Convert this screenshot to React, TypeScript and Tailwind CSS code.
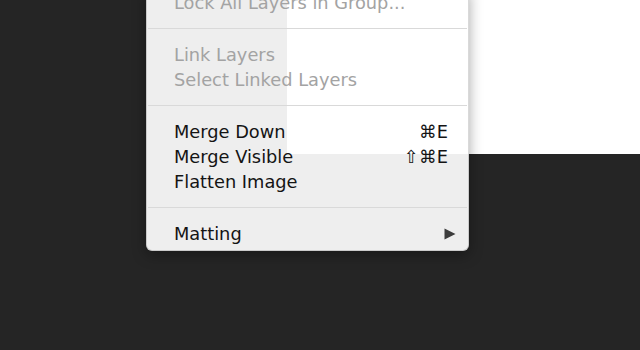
import React from "react";

const font = { fontFamily: '"DejaVu Sans", "Liberation Sans", sans-serif' };

function Item({
  label,
  disabled,
  shortcut,
  submenu,
}: {
  label: string;
  disabled?: boolean;
  shortcut?: string;
  submenu?: boolean;
}) {
  return (
    <div
      className={`flex h-[25px] items-center pl-[27px] pr-[12px] text-[17.8px] leading-[25px] ${
        disabled ? "text-[#a3a3a3]" : "text-[#141414]"
      }`}
    >
      <span className="flex-1 whitespace-nowrap">{label}</span>
      {shortcut && <span className="mr-[8px] whitespace-nowrap">{shortcut}</span>}
      {submenu && (
        <svg width="12" height="12" viewBox="0 0 12 12" className="mt-[1px]">
          <polygon points="0.5,0.5 11.5,6 0.5,11.5" fill="#3c3c3c" />
        </svg>
      )}
    </div>
  );
}

function Sep() {
  return (
    <div className="px-[1px] pt-[13px] pb-[13px]">
      <div className="h-px bg-[#d9d9d9]" />
    </div>
  );
}

export default function App() {
  return (
    <div className="relative h-[350px] w-[640px] overflow-hidden bg-[#252525]" style={font}>
      <div className="flex">
        <div className="w-[287px] shrink-0" />
        <div className="h-[154px] flex-1 bg-white" />
      </div>

      <div className="absolute left-[146px] top-[-11px] w-[323px] rounded-b-[6px] border border-black/15 bg-white/[0.92] pb-[4px] shadow-[0_4px_14px_rgba(0,0,0,0.35)]">
        <Item label="Lock All Layers in Group..." disabled />
        <Sep />
        <Item label="Link Layers" disabled />
        <Item label="Select Linked Layers" disabled />
        <Sep />
        <Item label="Merge Down" shortcut="⌘E" />
        <Item label="Merge Visible" shortcut="⇧⌘E" />
        <Item label="Flatten Image" />
        <Sep />
        <Item label="Matting" submenu />
      </div>
    </div>
  );
}
